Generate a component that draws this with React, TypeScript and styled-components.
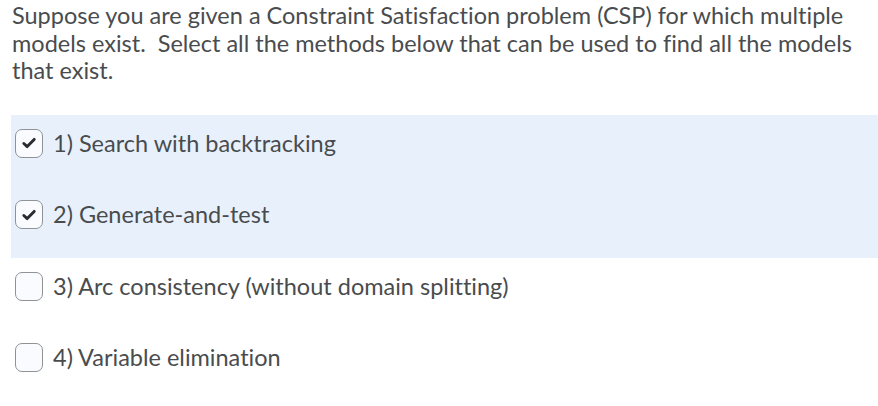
import React, { FC } from "react";
import styled, { createGlobalStyle } from "styled-components";

const GlobalStyle = createGlobalStyle`
  html, body {
    margin: 0;
    padding: 0;
    background: #ffffff;
  }
  body {
    font-family: Lato, "Noto Sans", sans-serif;
    color: #494c4e;
  }
`;

interface Choice {
  label: string;
  checked: boolean;
}

const choices: Choice[] = [
  { label: "1) Search with backtracking", checked: true },
  { label: "2) Generate-and-test", checked: true },
  { label: "3) Arc consistency (without domain splitting)", checked: false },
  { label: "4) Variable elimination", checked: false },
];

const CheckBox: FC<{ checked: boolean }> = function ({ checked }) {
  return (
    <Box>
      {checked && (
        <svg width="18" height="18" viewBox="0 0 16 16">
          <path
            d="M3.4 8.4 L6.4 11.2 L12.6 4.8"
            fill="none"
            stroke="#2a2c2e"
            strokeWidth="2.6"
            strokeLinecap="round"
            strokeLinejoin="round"
          />
        </svg>
      )}
    </Box>
  );
};

const App: FC = function () {
  return (
    <>
      <GlobalStyle />
      <Root>
        <Question>
          Suppose you are given a Constraint Satisfaction problem (CSP) for which
          multiple models exist.&nbsp; Select all the methods below that can be
          used to find all the models that exist.
        </Question>
        <Choices>
          {choices.map((c) => (
            <Row key={c.label} $selected={c.checked}>
              <CheckBox checked={c.checked} />
              <Label>{c.label}</Label>
            </Row>
          ))}
        </Choices>
      </Root>
    </>
  );
};

export default App;

const Root = styled.div`
  width: 878px;
  padding: 2px 0 0 11px;
  box-sizing: border-box;
`;

const Question = styled.p`
  margin: 0;
  padding-left: 1px;
  width: 848px;
  font-size: 23.5px;
  line-height: 27.5px;
  font-variant-ligatures: none;
`;

const Choices = styled.div`
  display: flex;
  flex-direction: column;
  margin-top: 30px;
`;

const Row = styled.div<{ $selected: boolean }>`
  display: flex;
  align-items: flex-start;
  gap: 10px;
  height: 71.5px;
  box-sizing: border-box;
  padding: 14px 0 0 4px;
  background-color: ${(p) => (p.$selected ? "#e8f1fb" : "transparent")};
`;

const Box = styled.div`
  width: 26px;
  height: 27px;
  flex-shrink: 0;
  border: 1px solid #8f9396;
  border-radius: 7px;
  background: #f9fbff;
  display: flex;
  align-items: center;
  justify-content: center;
`;

const Label = styled.span`
  font-size: 23.5px;
  line-height: 28px;
  font-variant-ligatures: none;
`;
